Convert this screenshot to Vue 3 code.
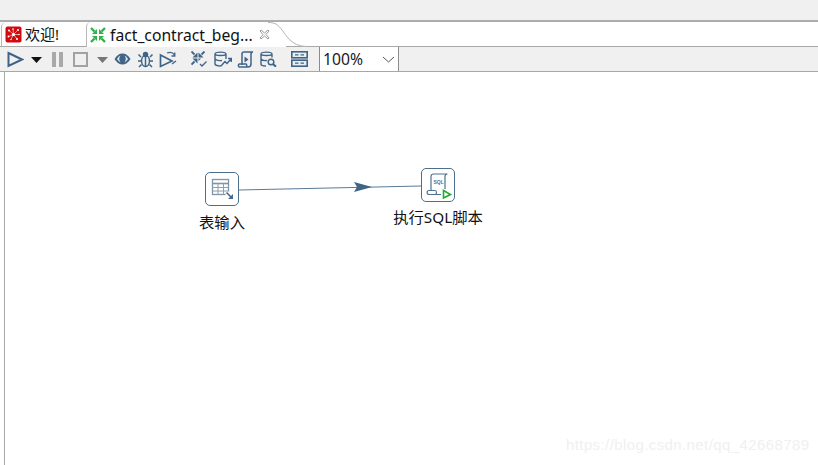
<template>
  <div class="app">
    <div class="strip"></div>
    <div class="tabs">
      <div class="tab first">
        <svg class="tabicon" width="17" height="17" viewBox="0 0 17 17">
          <rect x="0.500" y="0.500" width="16" height="16" rx="2" fill="#d10a10" />
          <g stroke="#f3b8b8" stroke-width="0.800" fill="#fff">
            <path d="M8.500 8.500 4 4.500M8.500 8.500 8 3M8.500 8.500 13 4M8.500 8.500 3.500 10.500M8.500 8.500 12 13M8.500 8.500 14 8.500M8.500 8.500 6 13.500" />
            <circle cx="8.500" cy="8.500" r="1.600" stroke="none" />
            <circle cx="4" cy="4.500" r="1" stroke="none" />
            <circle cx="8" cy="3" r="0.800" stroke="none" />
            <circle cx="13" cy="4" r="1" stroke="none" />
            <circle cx="3.500" cy="10.500" r="0.900" stroke="none" />
            <circle cx="12" cy="13" r="1" stroke="none" />
            <circle cx="14" cy="8.500" r="0.800" stroke="none" />
            <circle cx="6" cy="13.500" r="0.800" stroke="none" />
          </g>
        </svg>
        <span class="label">欢迎!</span>
      </div>
      <div class="tab second">
        <svg class="tabicon" width="16" height="16" viewBox="0 0 16 16" fill="#2fb24c" stroke="none">
          <g stroke="#2fb24c" stroke-width="2.400">
            <path d="M1 1 4.500 4.500" />
            <path d="M15 1 11.500 4.500" />
            <path d="M1 15 4.500 11.500" />
            <path d="M15 15 11.500 11.500" />
          </g>
          <path d="M7 7V2L2 7Z" />
          <path d="M9 7V2L14 7Z" />
          <path d="M7 9V14L2 9Z" />
          <path d="M9 9V14L14 9Z" />
        </svg>
        <span class="label file">fact_contract_beg...</span>
        <svg class="close" width="11" height="11" viewBox="0 0 11 11" fill="#fff" stroke="#9a9a9a" stroke-width="1">
          <path d="M1 2 2 1 5.500 4 9 1 10 2 7 5.500 10 9 9 10 5.500 7 2 10 1 9 4 5.500Z" />
        </svg>
      </div>
      <svg class="curve" width="50" height="26" viewBox="0 0 50 26" fill="none">
        <path d="M0 0.500C8 0.500 10 3 14 8 18 13 23 24 38 24.500" fill="#fff" stroke="#b4b4b4" stroke-width="1" />
      </svg>
    </div>
    <div class="toolbar">
      <svg class="ic run" width="17" height="17" viewBox="0 0 17 17" fill="none" stroke="#3f6486" stroke-width="2"><path d="M1.500 2 15 8.500 1.500 15Z" /></svg>
      <svg class="drop" width="11" height="6" viewBox="0 0 11 6"><path d="M0 0H11L5.500 6Z" fill="#111" /></svg>
      <div class="pause"><i></i><i></i></div>
      <div class="stop"></div>
      <svg class="drop dim" width="11" height="6" viewBox="0 0 11 6"><path d="M0 0H11L5.500 6Z" fill="#777" /></svg>
      <svg class="eye" width="17" height="12" viewBox="0 0 17 12"><path d="M0.500 6C3 2 5.500 0.500 8.500 0.500S14 2 16.500 6C14 10 11.500 11.500 8.500 11.500S3 10 0.500 6Z" fill="#3f6486" /><path d="M3 6C4.500 3.800 5.500 3 6.500 2.600 4.800 5 4.800 7 6.500 9.400 5.500 9 4.500 8.200 3 6Z" fill="#dfe6ec" /><path d="M14 6C12.500 3.800 11.500 3 10.500 2.600 12.200 5 12.200 7 10.500 9.400 11.500 9 12.500 8.200 14 6Z" fill="#dfe6ec" /></svg>
      <svg class="bug" width="17" height="17" viewBox="0 0 17 17" fill="none" stroke="#3f6486" stroke-width="1.500"><ellipse cx="8.500" cy="10" rx="4" ry="5.500" /><circle cx="8.500" cy="3.500" r="2" fill="#3f6486" /><path d="M4 6 1.500 3.500M13 6 15.500 3.500M4 10H1M13 10H16M4.500 13.500 2 16M12.500 13.500 15 16M8.500 5V15" /></svg>
      <svg class="ic step" width="18" height="17" viewBox="0 0 18 17" fill="none" stroke="#3f6486" stroke-width="1.700"><path d="M1.500 4 13 10 1.500 15.500Z" /><path d="M8 2C11 0.800 14 1.500 15.500 4M15.800 1.500V5H12.500" stroke-width="1.300" /><path d="M13 13 17 10" stroke-width="1.300" /></svg>
      <svg class="ic g1" width="16" height="16" viewBox="0 0 16 16" fill="#3f6486"><g stroke="#3f6486" stroke-width="1.800"><path d="M0.500 0.500 3.500 3.500M13.500 0.500 10.500 3.500M0.500 13.500 3.500 10.500" /></g><path d="M6.500 6.500V1.500L1.500 6.500Z" /><path d="M7.500 6.500V1.500L12.500 6.500Z" /><path d="M6.500 7.500V12.500L1.500 7.500Z" /><path d="M7.500 7.500V10L10 7.500Z" /><path d="M9 13 11 15 15.500 10.500" fill="none" stroke="#3f6486" stroke-width="1.300" /></svg>
      <svg class="ic g2" width="18" height="16" viewBox="0 0 18 16" fill="none" stroke="#3f6486" stroke-width="1.400"><path d="M1 3C1 0.500 12 0.500 12 3V8M1 3C1 5 12 5 12 3M1 3V13C1 14 4 15 7 15M1 8C2 9.500 6 9.800 8 9.500" /><path d="M7 15 11 10.500 13 12.500 17 8M14 7.500H17.300V11" /></svg>
      <svg class="ic g3" width="17" height="17" viewBox="0 0 17 17" fill="none" stroke="#3f6486" stroke-width="1.500"><path d="M5 14V3C5 1.500 6 1 7 1H16C14.500 1 14 2 14 3V13C14 15 13 16 11 16H2.500C1 16 1 13 2.500 13H9C10 13 10 16 9 16" /><path d="M7.500 5.500 11.500 8.500 7.500 11.500Z" fill="#3f6486" stroke="none" /></svg>
      <svg class="ic g4" width="17" height="16" viewBox="0 0 17 16" fill="none" stroke="#3f6486" stroke-width="1.400"><path d="M1 3C1 0.500 12 0.500 12 3V6.500M1 3C1 5 12 5 12 3M1 3V13C1 14.300 4 15 6 15M1 8C2 9.500 5 9.800 7 9.500" /><circle cx="11" cy="11" r="2.800" /><path d="M13 13 16 15.800" stroke-width="2" /></svg>
      <svg class="ic g5" width="17" height="16" viewBox="0 0 17 16"><rect x="0.800" y="0.800" width="15.400" height="6" fill="#e9eef2" stroke="#3f6486" stroke-width="1.600" /><rect x="0.800" y="9.200" width="15.400" height="6" fill="#e9eef2" stroke="#3f6486" stroke-width="1.600" /><path d="M4 3.800H7.500M9.500 3.800H13M4 12.200H7.500M9.500 12.200H13" stroke="#3f6486" stroke-width="1.200" /></svg>
      <div class="zoom">
        <span>100%</span>
        <svg width="13" height="7" viewBox="0 0 13 7" fill="none" stroke="#555" stroke-width="1"><path d="M1 1 6.500 6 12 1" /></svg>
      </div>
    </div>
    <div class="canvas">
      <svg class="hop" width="240" height="30" viewBox="0 0 240 30">
        <path d="M2 20 184 16" stroke="#3f6486" stroke-width="1" opacity="0.850" />
        <path d="M117 12 135 17 117 22 120 17Z" fill="#3f6486" />
      </svg>
      <div class="node n1">
        <div class="box">
          <svg width="26" height="26" viewBox="0 0 26 26" fill="none" stroke="#8ba0b2" stroke-width="1">
            <rect x="3.500" y="3.500" width="16" height="15" fill="#fff" stroke="#7d95a8" stroke-width="1.300" />
            <path d="M3.500 7.500H19.500" stroke="#7d95a8" stroke-width="1.600" />
            <path d="M3.500 11.500H19.500M3.500 15H19.500M9 7.500V18.500M14.500 7.500V18.500" />
            <path d="M18 17 23.500 22.500" stroke="#fff" stroke-width="5" />
            <path d="M17.500 16.500 23 22" stroke="#44698a" stroke-width="1.600" />
            <path d="M24 18V23H19Z" fill="#44698a" stroke="none" />
          </svg>
        </div>
        <div class="name">表输入</div>
      </div>
      <div class="node n2">
        <div class="box">
          <svg width="28" height="28" viewBox="0 0 28 28" fill="none" stroke="#4f7391" stroke-width="1.200">
            <path d="M7 19.500V5.500C7 4 8 3 9.500 3H23.500C22 3 21 4 21 5.500V18" fill="#fff" />
            <path d="M17 23.500H5C2.500 23.500 2.500 19.500 5 19.500H11C13 19.500 13 23.500 11 23.500" fill="#fff" />
            <text x="9.500" y="12.500" class="sql">SQL</text>
            <path d="M19.500 19.500 26.500 23.500 19.500 27Z" fill="#fff" stroke="#1fae2d" stroke-width="1.600" />
          </svg>
        </div>
        <div class="name">执行SQL脚本</div>
      </div>
      <div class="mark">https://blog.csdn.net/qq_42668789</div>
    </div>
  </div>
</template>

<script setup>
</script>

<style>
html, body { margin: 0; background: #fff; overflow: hidden; }
</style>

<style scoped>
.app {
  width: 818px;
  height: 465px;
  display: flex;
  flex-direction: column;
  overflow: hidden;
  font-family: "Noto Sans", "Noto Sans CJK SC", sans-serif;
  color: #111;
  background: #fff;
}
.strip {
  height: 20px;
  flex: none;
  background: #f0f0f0;
  border-bottom: 2px solid #acacac;
}
.tabs {
  height: 24px;
  flex: none;
  position: relative;
  display: flex;
  background: #fff;
  border-bottom: 1px solid #a8a8a8;
}
.tab {
  display: flex;
  align-items: center;
  height: 24px;
  box-sizing: border-box;
  background: #fff;
}
.first {
  width: 85px;
  gap: 3px;
  border-left: 1px solid #b8b8b8;
  border-top-left-radius: 5px;
  margin-left: 1px;
  padding-left: 3px;
}
.second {
  width: 200px;
  padding-left: 3px;
  gap: 4px;
  border-left: 1px solid #b8b8b8;
  border-top-left-radius: 5px;
  position: relative;
  z-index: 1;
  height: 25px;
}
.tabicon { flex: none; }
.label { font-size: 15px; line-height: 20px; white-space: nowrap; }
.file { font-size: 15.700px; }
.close { margin-left: 2px; flex: none; }
.curve {
  position: absolute;
  left: 268px;
  top: 0;
  z-index: 2;
}
.toolbar {
  height: 25px;
  flex: none;
  display: flex;
  align-items: center;
  background: #f0f0f0;
  border-bottom: 1px solid #a8a8a8;
  padding-left: 7px;
  box-sizing: border-box;
}
.ic, .eye, .bug, .drop, .pause, .stop { flex: none; }
.run { margin-right: 7px; }
.drop { margin-right: 8px; margin-top: 1px; }
.pause { display: flex; gap: 3px; height: 15px; margin-left: 2px; margin-right: 10px; }
.pause i { width: 4px; background: #a9a9a9; display: block; }
.stop { width: 11px; height: 11px; border: 2px solid #a2a2a2; margin-right: 9px; }
.dim { margin-right: 6px; }
.eye { margin-right: 6px; }
.bug { margin-right: 5px; }
.step { margin-right: 14px; }
.g1 { margin-right: 7px; }
.g2 { margin-right: 5px; }
.g3 { margin-right: 6px; }
.g4 { margin-right: 14px; }
.g5 { margin-right: 11px; }
.zoom {
  width: 80px;
  height: 24px;
  box-sizing: border-box;
  background: #fff;
  border-left: 1px solid #8c8c8c;
  border-right: 1px solid #8c8c8c;
  display: flex;
  align-items: center;
  justify-content: space-between;
  padding: 0 3px 0 3px;
  font-size: 15.700px;
  color: #1a1a1a;
}
.canvas {
  flex: 1;
  position: relative;
  background: #fff;
  border-left: 1px solid #a8a8a8;
  margin-left: 4px;
}
.hop { position: absolute; left: 232px; top: 98px; }
.node { position: absolute; display: flex; flex-direction: column; align-items: center; }
.n1 { left: 167px; top: 100px; width: 100px; }
.n2 { left: 378px; top: 96px; width: 110px; }
.box {
  width: 32px;
  height: 32px;
  border: 1px solid #4b6f8c;
  border-radius: 5px;
  background: #fff;
  display: flex;
  align-items: center;
  justify-content: center;
}
.n1 .name { margin-top: 6px; }
.n2 .name { margin-top: 5px; }
.name { font-size: 15.300px; line-height: 20px; color: #111; white-space: nowrap; }
.sql { font: bold 5px "Liberation Sans", sans-serif; fill: #4f7391; stroke: none; }
.mark {
  position: absolute;
  left: 561px;
  top: 364px;
  font: 15px "Liberation Sans", sans-serif;
  letter-spacing: 0.400px;
  color: #f0f0f0;
  white-space: nowrap;
}
</style>
